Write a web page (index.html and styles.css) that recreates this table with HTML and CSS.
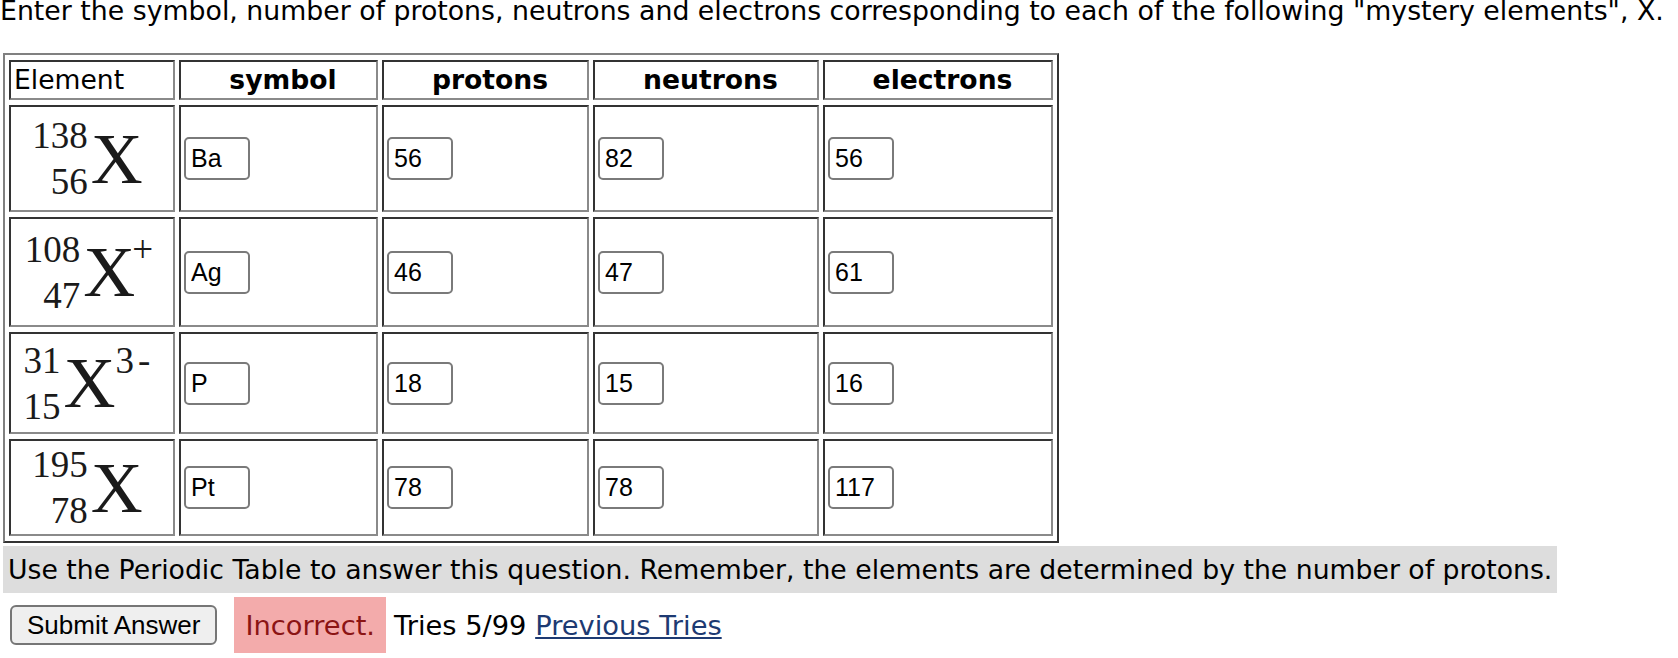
FILE: index.html
```html
<!DOCTYPE html>
<html lang="en">
<head>
<meta charset="utf-8">
<title>Mystery elements</title>
<link rel="stylesheet" href="styles.css">
</head>
<body>
<p class="prompt">Enter the symbol, number of protons, neutrons and electrons corresponding to each of the following "mystery elements", X.</p>
<table class="qtable">
  <tr class="head">
    <th class="c1 plain">Element</th>
    <th class="c2">symbol</th>
    <th class="c3">protons</th>
    <th class="c4">neutrons</th>
    <th class="c5">electrons</th>
  </tr>
  <tr class="r1">
    <td class="nuc-cell"><span class="nuc"><span class="mass">138</span><span class="x">X</span><span class="atom">56</span></span></td>
    <td><input class="ans" type="text" value="Ba"></td>
    <td><input class="ans" type="text" value="56"></td>
    <td><input class="ans" type="text" value="82"></td>
    <td><input class="ans" type="text" value="56"></td>
  </tr>
  <tr class="r2">
    <td class="nuc-cell"><span class="nuc"><span class="mass">108</span><span class="x">X</span><span class="chg">+</span><span class="atom">47</span></span></td>
    <td><input class="ans" type="text" value="Ag"></td>
    <td><input class="ans" type="text" value="46"></td>
    <td><input class="ans" type="text" value="47"></td>
    <td><input class="ans" type="text" value="61"></td>
  </tr>
  <tr class="r3">
    <td class="nuc-cell"><span class="nuc"><span class="mass">31</span><span class="x">X</span><span class="chg spaced">3-</span><span class="atom">15</span></span></td>
    <td><input class="ans" type="text" value="P"></td>
    <td><input class="ans" type="text" value="18"></td>
    <td><input class="ans" type="text" value="15"></td>
    <td><input class="ans" type="text" value="16"></td>
  </tr>
  <tr class="r4">
    <td class="nuc-cell"><span class="nuc"><span class="mass">195</span><span class="x">X</span><span class="atom">78</span></span></td>
    <td><input class="ans" type="text" value="Pt"></td>
    <td><input class="ans" type="text" value="78"></td>
    <td><input class="ans" type="text" value="78"></td>
    <td><input class="ans" type="text" value="117"></td>
  </tr>
</table>
<div class="hint">Use the Periodic Table to answer this question. Remember, the elements are determined by the number of protons.</div>
<div class="actions">
  <button class="submit" type="button">Submit Answer</button>
  <span class="verdict">Incorrect.</span>
  <span class="tries">Tries 5/99 <a class="prev" href="#">Previous Tries</a></span>
</div>
</body>
</html>
```
FILE: styles.css
```css
body {
  margin: 0;
  font-family: "DejaVu Sans", Verdana, sans-serif;
  font-size: 26.8px;
  color: #000;
  background: #fff;
}

.prompt {
  margin: 0;
  font-size: 26.75px;
  line-height: 22px;
  white-space: nowrap;
}

.qtable {
  margin: 31px 0 0 3px;
  border-collapse: separate;
  border-spacing: 4px 5px;
  border: 2px solid;
  border-color: #808080 #333 #333 #808080;
  font-size: 26.6px;
}

.qtable th,
.qtable td {
  border: 2px solid;
  border-color: #333 #8a8a8a #8a8a8a #333;
  padding: 3px;
  vertical-align: middle;
}

.qtable th {
  font-weight: bold;
  text-align: center;
  text-indent: 9px;
  line-height: 30px;
}

.qtable th.plain {
  font-weight: normal;
  text-align: left;
  text-indent: 0;
}

.c1 { width: 156px; }
.c2 { width: 189px; }
.c3 { width: 197px; }
.c4 { width: 216px; }
.c5 { width: 220px; }

.head { height: 40px; }
.r1 { height: 107px; }
.r2 { height: 110px; }
.r3 { height: 102px; }
.r4 { height: 97px; }

.qtable td.nuc-cell {
  text-align: center;
  padding: 3px 9px 3px 3px;
}

.nuc {
  display: inline-grid;
  grid-template-columns: auto auto auto;
  grid-template-rows: auto auto;
  row-gap: 9px;
  column-gap: 3px;
  font-family: "Liberation Serif", "Times New Roman", serif;
  color: #1a1a1a;
  vertical-align: middle;
}

.mass,
.atom,
.chg {
  font-size: 37px;
  line-height: 1;
}

.mass {
  grid-column: 1;
  grid-row: 1;
  justify-self: end;
}

.atom {
  grid-column: 1;
  grid-row: 2;
  justify-self: end;
}

.x {
  grid-column: 2;
  grid-row: 1 / span 2;
  align-self: center;
  font-size: 72px;
  line-height: 1;
}

.chg {
  grid-column: 3;
  grid-row: 1;
  margin-left: -6px;
}

.chg.spaced {
  margin-left: -3px;
  letter-spacing: 4px;
}

.ans {
  box-sizing: border-box;
  width: 66px;
  height: 43px;
  margin: 0;
  padding: 0 5px;
  border: 2px solid #7a7a7a;
  border-radius: 5px;
  font-family: "Liberation Sans", Arial, sans-serif;
  font-size: 25px;
  color: #000;
  background: #fff;
  vertical-align: middle;
}

.hint {
  width: fit-content;
  margin: 3px 0 0 3px;
  padding: 8px 5px 8px 5px;
  background: #dddddd;
  font-size: 26.7px;
  white-space: nowrap;
}

.actions {
  display: flex;
  align-items: center;
  margin-top: 4px;
  padding-left: 10px;
  font-size: 27.3px;
}

.submit {
  box-sizing: border-box;
  height: 40px;
  margin: 0 17px 0 0;
  padding: 0 15px;
  border: 2px solid #767676;
  border-radius: 6px;
  background: #efefef;
  font-family: "Liberation Sans", Arial, sans-serif;
  font-size: 26px;
  color: #000;
}

.verdict {
  padding: 12.5px 11px 12.5px 11px;
  background: #f3abab;
  color: #8b1414;
}

.tries {
  margin-left: 8px;
}

.prev {
  color: #1d3a72;
  text-decoration: underline;
}
```
